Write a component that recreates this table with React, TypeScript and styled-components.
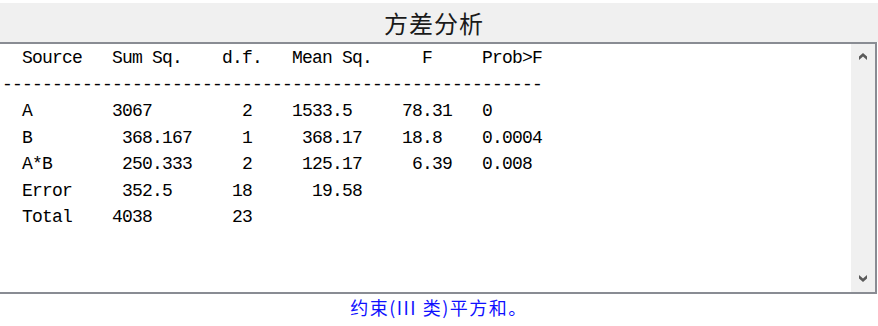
import React from 'react'
import styled, { createGlobalStyle } from 'styled-components'

const GlobalStyle = createGlobalStyle`
    html, body {
        margin: 0;
        padding: 0;
        background: #ffffff;
    }
`

const Page = styled.div`
    width: 878px;
    height: 326px;
    padding-top: 3px;
    box-sizing: border-box;
    display: flex;
    flex-direction: column;
`

const TitleBar = styled.div`
    height: 39px;
    background: #f0f0f0;
    display: flex;
    align-items: center;
    justify-content: center;
    padding-right: 10px;
    font-family: "Noto Sans CJK SC", sans-serif;
    font-size: 24px;
    color: #1a1a1a;
    letter-spacing: 1px;
`

const OutputPanel = styled.div`
    width: 877px;
    height: 252px;
    box-sizing: border-box;
    border-top: 2px solid #898c93;
    border-right: 2px solid #898c93;
    border-bottom: 2px solid #898c93;
    display: flex;
    flex-direction: row;
`

const TextArea = styled.div`
    flex: 1;
    padding-left: 2px;
    padding-top: 1px;
    overflow: hidden;
`

const Line = styled.div`
    font-family: "Liberation Mono", monospace;
    font-size: 18px;
    letter-spacing: -0.8px;
    line-height: 26.5px;
    height: 26.5px;
    white-space: pre;
    color: #000000;
`

const ScrollBar = styled.div`
    width: 24px;
    background: #f0f0f0;
    display: flex;
    flex-direction: column;
    justify-content: space-between;
    align-items: center;
    padding: 9px 0 10px 0;
    box-sizing: border-box;
`

const Footer = styled.div`
    flex: 1;
    display: flex;
    justify-content: center;
    align-items: flex-start;
    padding-top: 0px;
    font-family: "Noto Sans CJK SC", sans-serif;
    font-size: 18px;
    letter-spacing: 1.5px;
    color: #1010ff;
`

const Arrow = ({ down }: { down?: boolean }) => (
    <svg width="8" height="7" viewBox="0 0 8 7" style={{ transform: down ? 'rotate(180deg)' : undefined }}>
        <path d="M4 0 L8 3.5 L8 7 L4 3.5 L0 7 L0 3.5 Z" fill="#5a5a5a" />
    </svg>
)

// place each text at its character column, like the fixed-width report does
const place = (cells: [number, string][]) => {
    let out = ''
    cells.forEach(([col, text]) => {
        out = out.padEnd(col, ' ') + text
    })
    return out
}

const lines: string[] = [
    place([[2, 'Source'], [11, 'Sum Sq.'], [22, 'd.f.'], [29, 'Mean Sq.'], [42, 'F'], [48, 'Prob>F']]),
    '-'.repeat(54),
    place([[2, 'A'], [11, '3067'], [24, '2'], [29, '1533.5'], [40, '78.31'], [48, '0']]),
    place([[2, 'B'], [12, '368.167'], [24, '1'], [30, '368.17'], [40, '18.8'], [48, '0.0004']]),
    place([[2, 'A*B'], [12, '250.333'], [24, '2'], [30, '125.17'], [41, '6.39'], [48, '0.008']]),
    place([[2, 'Error'], [12, '352.5'], [23, '18'], [31, '19.58']]),
    place([[2, 'Total'], [11, '4038'], [23, '23']]),
]

export default function App() {
    return (
        <Page>
            <GlobalStyle />
            <TitleBar>方差分析</TitleBar>
            <OutputPanel>
                <TextArea>
                    {lines.map((line, i) => (
                        <Line key={i}>{line}</Line>
                    ))}
                </TextArea>
                <ScrollBar>
                    <Arrow />
                    <Arrow down />
                </ScrollBar>
            </OutputPanel>
            <Footer>约束(III 类)平方和。</Footer>
        </Page>
    )
}
